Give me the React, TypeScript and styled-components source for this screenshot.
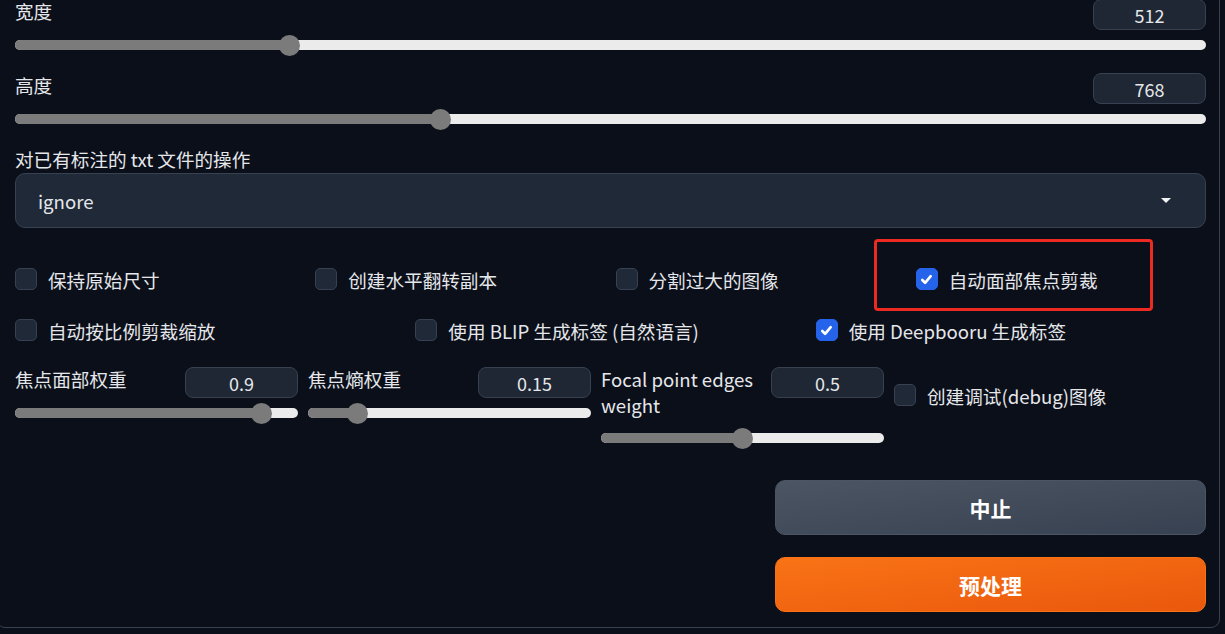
import React from "react";
import styled, { createGlobalStyle } from "styled-components";

const GlobalStyle = createGlobalStyle`
  html, body {
    margin: 0;
    padding: 0;
    background: #0b0f19;
    overflow: hidden;
  }
  body {
    font-family: "Noto Sans CJK SC", "Noto Sans", sans-serif;
    color: #e5e7eb;
  }
`;

const Panel = styled.div`
  box-sizing: border-box;
  width: 1224px;
  margin: -14px 0 0 -4px;
  padding: 12px 13px 15px 18px;
  border: 1px solid #374151;
  border-radius: 0 0 9px 9px;
  display: flex;
  flex-direction: column;
`;

const SliderBlock = styled.div<{ $gapAfter?: number }>`
  display: flex;
  flex-direction: column;
  margin-bottom: ${(p) => p.$gapAfter ?? 0}px;
`;

const SliderHeader = styled.div`
  display: flex;
  justify-content: space-between;
  align-items: flex-start;
  gap: 8px;
`;

const Label = styled.span`
  font-size: 18.6px;
  line-height: 26px;
  padding-bottom: 5px;
  margin-top: -1px;
`;

const NumberBox = styled.div`
  box-sizing: border-box;
  flex: none;
  width: 113px;
  height: 31px;
  border: 1px solid #374151;
  border-radius: 8px;
  background: #1e2733;
  display: flex;
  align-items: center;
  justify-content: center;
  font-size: 18px;
  color: #e5e7eb;
`;

const TrackWrap = styled.div<{ $top?: number }>`
  position: relative;
  height: 20px;
  margin-top: ${(p) => p.$top ?? 5}px;
  display: flex;
  align-items: center;
`;

const Track = styled.div`
  position: relative;
  width: 100%;
  height: 10px;
  border-radius: 5px;
  background: #ebebeb;
  overflow: hidden;
`;

const Fill = styled.div`
  height: 100%;
  background: #7b7b7b;
`;

const Thumb = styled.div`
  position: absolute;
  top: -0.5px;
  width: 21px;
  height: 21px;
  margin-left: -10.5px;
  border-radius: 50%;
  background: #7b7b7b;
`;

const DropLabel = styled.div`
  font-size: 18.6px;
  line-height: 24px;
  margin-bottom: 2px;
`;

const Dropdown = styled.div`
  box-sizing: border-box;
  height: 55px;
  border: 1px solid #374151;
  border-radius: 10px;
  background: #1f2937;
  display: flex;
  align-items: center;
  justify-content: space-between;
  padding: 0 34px 0 22px;
  font-size: 18.6px;
`;

const Caret = styled.span`
  width: 0;
  height: 0;
  border-left: 5px solid transparent;
  border-right: 5px solid transparent;
  border-top: 5px solid #f3f4f6;
`;

const CheckRow = styled.div<{ $cols: number; $top: number }>`
  display: grid;
  grid-template-columns: repeat(${(p) => p.$cols}, 1fr);
  gap: 10px;
  margin-top: ${(p) => p.$top}px;
`;

const CheckItem = styled.label`
  position: relative;
  display: flex;
  align-items: center;
  gap: 11px;
  height: 22px;
  font-size: 18.6px;
  white-space: nowrap;
`;

const Box = styled.span<{ $checked?: boolean }>`
  box-sizing: border-box;
  flex: none;
  width: 22px;
  height: 22px;
  border-radius: 5px;
  border: 1px solid ${(p) => (p.$checked ? "#2563eb" : "#374151")};
  background: ${(p) => (p.$checked ? "#2563eb" : "#1f2937")};
  display: flex;
  align-items: center;
  justify-content: center;
`;

const Highlight = styled.span`
  position: absolute;
  left: -42px;
  top: -29px;
  width: 279px;
  height: 72px;
  box-sizing: border-box;
  border: 3px solid #ec2a22;
  border-radius: 4px;
  pointer-events: none;
`;

const WeightRow = styled.div`
  display: grid;
  grid-template-columns: 283px 283px 283px 1fr;
  gap: 10px;
  margin-top: 26px;
  align-items: start;
`;

const DebugCell = styled.div`
  margin-top: 17px;
`;

const Actions = styled.div`
  align-self: flex-end;
  width: 431px;
  display: flex;
  flex-direction: column;
  gap: 22px;
  margin-top: 32px;
`;

const ActionButton = styled.button<{ $variant: "stop" | "primary" }>`
  box-sizing: border-box;
  height: 55px;
  border-radius: 10px;
  font-family: "Noto Sans CJK SC", sans-serif;
  font-weight: 700;
  font-size: 21px;
  color: #ffffff;
  cursor: pointer;
  border: 1px solid
    ${(p) => (p.$variant === "primary" ? "#f97316" : "#4b5563")};
  background: ${(p) =>
    p.$variant === "primary"
      ? "linear-gradient(to bottom right, #f97316, #ea580c)"
      : "linear-gradient(to bottom right, #4b5563, #374151)"};
`;

interface SliderProps {
  label: string;
  value: number;
  min: number;
  max: number;
  display?: string;
  trackTop?: number;
  gapAfter?: number;
}

const Slider = ({ label, value, min, max, display, trackTop, gapAfter }: SliderProps) => {
  const ratio = (value - min) / (max - min);
  // thumb centre travels from 10px to (width - 10px)
  const pos = `calc(10px + (100% - 20px) * ${ratio})`;
  return (
    <SliderBlock $gapAfter={gapAfter}>
      <SliderHeader>
        <Label>{label}</Label>
        <NumberBox>{display ?? String(value)}</NumberBox>
      </SliderHeader>
      <TrackWrap $top={trackTop}>
        <Track>
          <Fill style={{ width: pos }} />
        </Track>
        <Thumb style={{ left: pos }} />
      </TrackWrap>
    </SliderBlock>
  );
};

const Check = ({ label, checked, highlight }: { label: string; checked?: boolean; highlight?: boolean }) => (
  <CheckItem>
    <Box $checked={checked}>
      {checked && (
        <svg width="15" height="15" viewBox="0 0 16 16">
          <path d="M3.5 8.5 L6.5 11.5 L12.5 4.5" fill="none" stroke="#fff" strokeWidth="2.8" strokeLinecap="round" strokeLinejoin="round" />
        </svg>
      )}
    </Box>
    {label}
    {highlight && <Highlight />}
  </CheckItem>
);

export default function App() {
  return (
    <>
      <GlobalStyle />
      <Panel>
        <Slider label="宽度" value={512} min={64} max={2048} gapAfter={18} />
        <Slider label="高度" value={768} min={64} max={2048} gapAfter={18} />

        <DropLabel>对已有标注的 txt 文件的操作</DropLabel>
        <Dropdown>
          ignore
          <Caret />
        </Dropdown>

        <CheckRow $cols={4} $top={40}>
          <Check label="保持原始尺寸" />
          <Check label="创建水平翻转副本" />
          <Check label="分割过大的图像" />
          <Check label="自动面部焦点剪裁" checked highlight />
        </CheckRow>
        <CheckRow $cols={3} $top={29}>
          <Check label="自动按比例剪裁缩放" />
          <Check label="使用 BLIP 生成标签 (自然语言)" />
          <Check label="使用 Deepbooru 生成标签" checked />
        </CheckRow>

        <WeightRow>
          <Slider label="焦点面部权重" value={0.9} min={0} max={1} />
          <Slider label="焦点熵权重" value={0.15} min={0} max={1} />
          <Slider label="Focal point edges weight" value={0.5} min={0} max={1} />
          <DebugCell>
            <Check label="创建调试(debug)图像" />
          </DebugCell>
        </WeightRow>

        <Actions>
          <ActionButton $variant="stop">中止</ActionButton>
          <ActionButton $variant="primary">预处理</ActionButton>
        </Actions>
      </Panel>
    </>
  );
}
